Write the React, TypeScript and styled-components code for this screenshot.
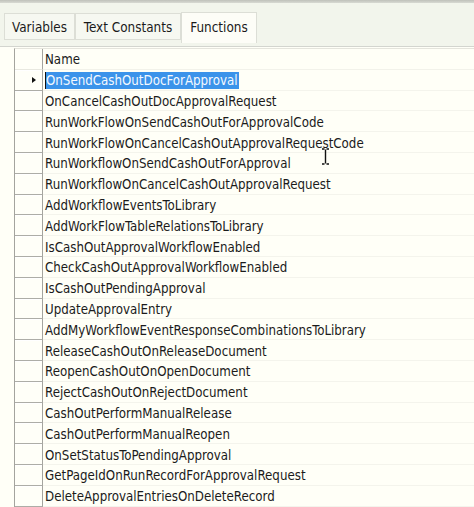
import styled, { createGlobalStyle } from "styled-components";

const functions = [
  "OnSendCashOutDocForApproval",
  "OnCancelCashOutDocApprovalRequest",
  "RunWorkFlowOnSendCashOutForApprovalCode",
  "RunWorkFlowOnCancelCashOutApprovalRequestCode",
  "RunWorkflowOnSendCashOutForApproval",
  "RunWorkflowOnCancelCashOutApprovalRequest",
  "AddWorkflowEventsToLibrary",
  "AddWorkFlowTableRelationsToLibrary",
  "IsCashOutApprovalWorkflowEnabled",
  "CheckCashOutApprovalWorkflowEnabled",
  "IsCashOutPendingApproval",
  "UpdateApprovalEntry",
  "AddMyWorkflowEventResponseCombinationsToLibrary",
  "ReleaseCashOutOnReleaseDocument",
  "ReopenCashOutOnOpenDocument",
  "RejectCashOutOnRejectDocument",
  "CashOutPerformManualRelease",
  "CashOutPerformManualReopen",
  "OnSetStatusToPendingApproval",
  "GetPageIdOnRunRecordForApprovalRequest",
  "DeleteApprovalEntriesOnDeleteRecord",
];

const tabs = [
  { label: "Variables", width: 71 },
  { label: "Text Constants", width: 106 },
  { label: "Functions", width: 76 },
];

const GlobalStyle = createGlobalStyle`
  html, body {
    margin: 0;
    padding: 0;
    background: #fffff7;
  }
  body {
    font-family: "DejaVu Sans Condensed", "DejaVu Sans", sans-serif;
    font-stretch: condensed;
    font-size: 13.2px;
    color: #1b1b1b;
    overflow: hidden;
  }
`;

const Window = styled.div`
  position: relative;
  width: 474px;
  height: 507px;
  overflow: hidden;
  display: flex;
  flex-direction: column;
`;

const TopEdge = styled.div`
  height: 3px;
  background: linear-gradient(#bfc1ba, #d8dad3);
`;

const TabStrip = styled.div`
  height: 44px;
  box-sizing: border-box;
  display: flex;
  align-items: flex-end;
  padding: 0 0 6px 4px;
  background: #f2f5ec;
  border-bottom: 1px solid #d3d5cf;
`;

const Tab = styled.div<{ $active: boolean; $width: number }>`
  box-sizing: border-box;
  width: ${(p) => p.$width}px;
  height: ${(p) => (p.$active ? 31 : 27)}px;
  margin-bottom: ${(p) => (p.$active ? -3 : 0)}px;
  display: flex;
  align-items: center;
  justify-content: center;
  padding-bottom: ${(p) => (p.$active ? 3 : 0)}px;
  padding-top: 1px;
  background: ${(p) => (p.$active ? "#fdfdf7" : "#f6f8f1")};
  border: 1px solid #dcded6;
  border-bottom: ${(p) => (p.$active ? "none" : "1px solid #dcded6")};
  color: #1a1a1a;
  font-size: 13.4px;
  white-space: nowrap;
`;

const Content = styled.div`
  flex: 1;
  background: #fffff7;
  padding: 1px 0 0 14px;
`;

const Grid = styled.div`
  border-left: 1px solid #a4a49e;
  border-top: 1px solid #e4e4dc;
`;

const Row = styled.div`
  display: grid;
  grid-template-columns: 28px 1fr;
  height: 20.8px;
`;

const Selector = styled.div<{ $header?: boolean }>`
  box-sizing: border-box;
  border-right: 1px solid #a4a49e;
  border-bottom: 1px solid ${(p) => (p.$header ? "#e8e8e0" : "#adada7")};
  box-shadow: ${(p) => (p.$header ? "none" : "inset 0 1px 0 #ffffff")};
  background: #fffff8;
  display: flex;
  align-items: center;
  justify-content: center;
  padding-left: 10px;
`;

const Arrow = styled.span`
  width: 0;
  height: 0;
  border-top: 3px solid transparent;
  border-bottom: 3px solid transparent;
  border-left: 4px solid #111;
`;

const NameCell = styled.div<{ $header?: boolean }>`
  box-sizing: border-box;
  display: flex;
  align-items: center;
  padding: 2px 0 0 2px;
  border-bottom: 1px solid ${(p) => (p.$header ? "#f2f2ea" : "#f4f4ec")};
  white-space: nowrap;
  overflow: hidden;
`;

const Selected = styled.span`
  background: #3b93ea;
  color: #f4f9ff;
  padding: 1px 1px 1px 0;
  border-left: 1px solid #111;
`;

const Cursor = styled.svg`
  position: absolute;
  left: 320px;
  top: 148px;
`;

export default function App() {
  return (
    <Window>
      <GlobalStyle />
      <TopEdge />
      <TabStrip>
        {tabs.map((t) => (
          <Tab key={t.label} $active={t.label === "Functions"} $width={t.width}>
            {t.label}
          </Tab>
        ))}
      </TabStrip>
      <Content>
        <Grid>
          <Row>
            <Selector $header />
            <NameCell $header>Name</NameCell>
          </Row>
          {functions.map((name, i) => (
            <Row key={name}>
              <Selector>{i === 0 && <Arrow />}</Selector>
              <NameCell>{i === 0 ? <Selected>{name}</Selected> : name}</NameCell>
            </Row>
          ))}
        </Grid>
      </Content>
      <Cursor width="11" height="17" viewBox="0 0 11 17">
        <path d="M2 1h2.5M6.5 1H9M5.5 1.5v14M2 16h2.5M6.5 16H9" stroke="#111" strokeWidth="1.4" fill="none" />
      </Cursor>
    </Window>
  );
}
